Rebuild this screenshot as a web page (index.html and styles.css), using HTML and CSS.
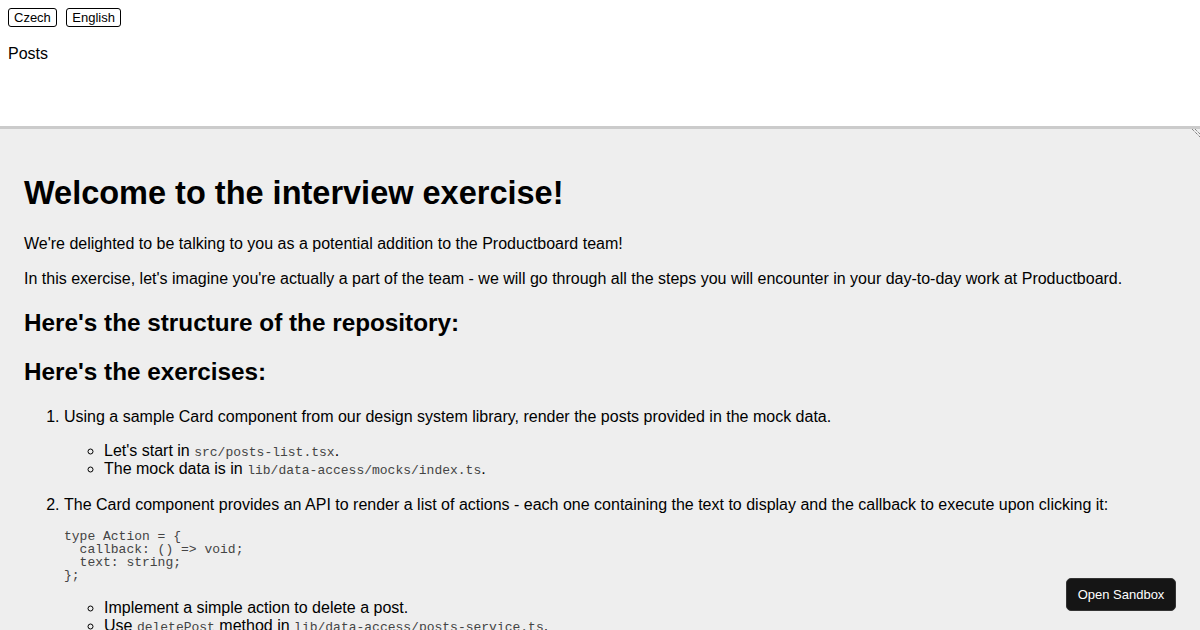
FILE: index.html
```html
<!DOCTYPE html>
<html lang="en">
<head>
    <meta charset="UTF-8">
    <meta name="viewport" content="width=device-width, initial-scale=1.0">
    <title>Interview exercise</title>
    <link rel="stylesheet" href="styles.css">
</head>
<body>

    <!-- Preview -->
    <div class="preview">
        <div class="lang">
            <button>Czech</button>
            <button>English</button>
        </div>
        <p>Posts</p>
    </div>

    <div class="divider"></div>

    <!-- Readme -->
    <div class="readme">
        <svg class="grip" width="8" height="8" viewBox="0 0 8 8">
            <path d="M0 0 L8 8 M3 0 L8 5" stroke="#555" stroke-width="1" stroke-dasharray="1 1" fill="none"/>
        </svg>

        <h1>Welcome to the interview exercise!</h1>
        <p>We're delighted to be talking to you as a potential addition to the Productboard team!</p>
        <p>In this exercise, let's imagine you're actually a part of the team - we will go through all the steps you will encounter in your day-to-day work at Productboard.</p>

        <h2>Here's the structure of the repository:</h2>
        <h2>Here's the exercises:</h2>

        <ol>
            <li>
                <p>Using a sample Card component from our design system library, render the posts provided in the mock data.</p>
                <ul>
                    <li>Let's start in <code>src/posts-list.tsx</code>.</li>
                    <li>The mock data is in <code>lib/data-access/mocks/index.ts</code>.</li>
                </ul>
            </li>
            <li>
                <p>The Card component provides an API to render a list of actions - each one containing the text to display and the callback to execute upon clicking it:</p>
<pre><code>type Action = {
  callback: () =&gt; void;
  text: string;
};</code></pre>
                <ul>
                    <li>Implement a simple action to delete a post.</li>
                    <li>Use <code>deletePost</code> method in <code>lib/data-access/posts-service.ts</code>.</li>
                </ul>
            </li>
        </ol>
    </div>

    <button class="sandbox">Open Sandbox</button>

</body>
</html>
```

FILE: styles.css
```css
html, body {
    height: 100%;
}

body {
    margin: 0;
    font-family: "Liberation Sans", Arial, sans-serif;
    color: #000;
    display: flex;
    flex-direction: column;
    overflow: hidden;
}

.preview {
    height: 126px;
    flex-shrink: 0;
    padding: 8px;
    box-sizing: border-box;
    background-color: #fff;
}

.preview p {
    margin: 17px 0;
    font-size: 16px;
}

.lang button {
    font-family: "Liberation Sans", Arial, sans-serif;
    font-size: 13px;
    background-color: #fff;
    color: #000;
    border: 1px solid #000;
    border-radius: 3px;
    padding: 1px 5px;
    margin-right: 5px;
}

.divider {
    height: 3px;
    flex-shrink: 0;
    background-color: #cbcbcb;
}

.readme {
    flex: 1;
    position: relative;
    background-color: #eee;
    padding: 24px;
    overflow: hidden;
    font-size: 16px;
}

.grip {
    position: absolute;
    top: 0;
    right: 0;
}

h1 {
    font-size: 32.5px;
    margin: 22px 0;
}

h2 {
    font-size: 24.3px;
    margin: 21px 0;
}

p {
    margin: 16px 0;
    line-height: 19px;
}

ol {
    padding-left: 40px;
    margin: 16px 0;
}

ul {
    list-style: circle;
    padding: 0 0 1px 40px;
    margin: 0;
}

code {
    font-family: "Liberation Mono", "Courier New", monospace;
    font-size: 13px;
    color: #444;
}

pre {
    font-family: "Liberation Mono", "Courier New", monospace;
    font-size: 13px;
    line-height: 13px;
    margin: 13px 0 17px;
}

pre code {
    color: #444;
}

.sandbox {
    position: fixed;
    right: 24px;
    bottom: 19px;
    width: 110px;
    height: 33px;
    background-color: #151515;
    color: #fff;
    border: 1px solid #333;
    border-radius: 5px;
    font-family: "Liberation Sans", Arial, sans-serif;
    font-size: 13px;
    cursor: pointer;
}
```
